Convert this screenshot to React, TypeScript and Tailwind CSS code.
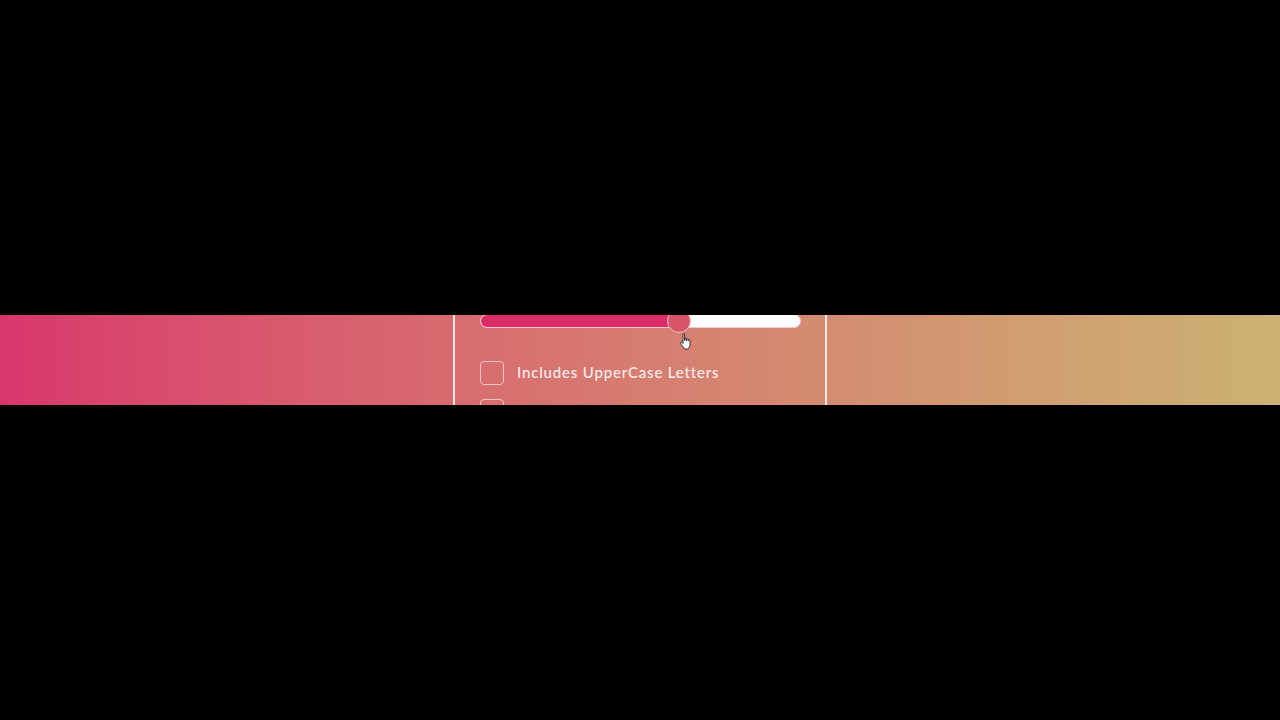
import React from "react";

function Checkbox({ label }: { label: string }) {
  return (
    <div className="flex items-center gap-[13px] h-6">
      <div className="w-6 h-6 shrink-0 rounded-[4px] border-[1.5px] border-[#f4c3c6]" />
      <span
        className="text-[15px] font-medium text-[#fbeeee] leading-none tracking-[0.82px] -mt-[1px]"
        style={{ fontFamily: "Lato, 'Open Sans', sans-serif" }}
      >
        {label}
      </span>
    </div>
  );
}

export default function App() {
  return (
    <div className="w-[1280px] h-[720px] bg-black flex flex-col">
      <div className="h-[315px] shrink-0" />
      <div className="h-[90px] shrink-0 overflow-hidden bg-gradient-to-r from-[#d8366c] to-[#cbb272] flex justify-center">
        <div className="w-[374px] h-[200px] border-x-2 border-[#f7e4e4] -mt-[6px] pl-[25px] pr-[24px] flex flex-col">
          <div className="relative h-6 flex items-center">
            <div className="w-full h-[14px] rounded-full border-[1.5px] border-[#f6c6cc] bg-white overflow-hidden flex">
              <div className="w-[200px] h-full bg-[#dc2b68]" />
            </div>
            <div className="absolute left-[187px] top-0 w-6 h-6 rounded-full bg-[#d6556b] border-[1.5px] border-[#f3c7c9]" />
            <svg
              className="absolute left-[199px] top-[23px]"
              width="14"
              height="19"
              viewBox="0 0 14 18"
            >
              <path
                d="M4 1.5c0-.8 1.6-.8 1.6 0V8h.3V6.3c0-.8 1.5-.8 1.5 0V8h.3V7c0-.8 1.5-.8 1.5 0v1.2h.3v-.6c0-.8 1.5-.8 1.5 0V12c0 2-1.2 3.5-2.2 4.5H5.6C4.8 15.4 3.5 13.8 2.4 12.3 1.8 11.4 1.2 10.6 1.6 10c.4-.6 1.4-.2 2.4 1V1.5z"
                fill="#fff"
                stroke="#222"
                strokeWidth="0.9"
                strokeLinejoin="round"
              />
            </svg>
          </div>
          <div className="h-[28px] shrink-0" />
          <div className="flex flex-col gap-[14px]">
            <Checkbox label="Includes UpperCase Letters" />
            <Checkbox label="Includes LowerCase Letters" />
          </div>
        </div>
      </div>
      <div className="flex-1" />
    </div>
  );
}
